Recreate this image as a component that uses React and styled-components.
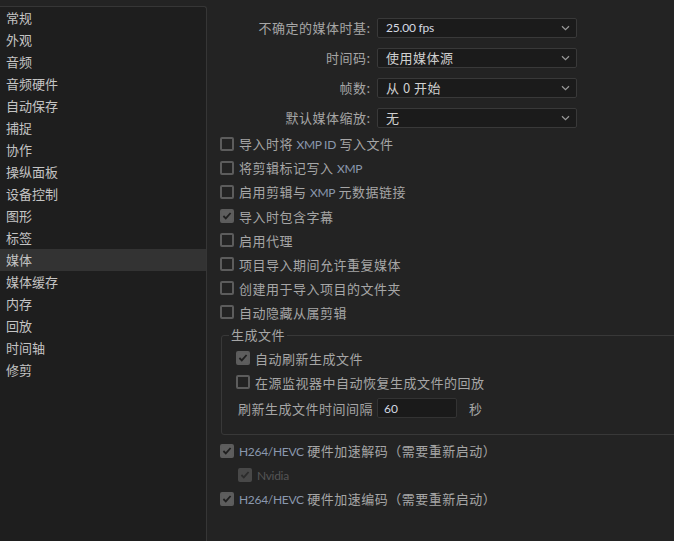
import React from 'react';
import styled, { createGlobalStyle } from 'styled-components';

const Global = createGlobalStyle`
  html, body { margin: 0; padding: 0; background: #232323; overflow: hidden; }
  body { font-family: "Noto Sans CJK SC", "Noto Sans", sans-serif; font-size: 13px; }
  #root { width: 674px; height: 541px; }
`;

const latinStack = '"Lato", "Open Sans", sans-serif';

const Layout = styled.div`
  display: flex;
  width: 674px;
  height: 541px;
  background: #232323;
  overflow: hidden;
`;

const Sidebar = styled.div`
  width: 207px;
  flex: none;
  padding-top: 6px;
  box-sizing: border-box;
`;

const SideList = styled.ul`
  margin: 0;
  padding: 0;
  list-style: none;
  height: 100%;
  background: #1e1e1e;
  border-top: 1px solid #363636;
  border-right: 1px solid #363636;
  border-top-right-radius: 3px;
  box-sizing: border-box;
`;

const SideItem = styled.li`
  height: 22px;
  line-height: 21px;
  padding-left: 6px;
  color: #c4c4c4;
  background: ${p => (p.$active ? '#333333' : 'transparent')};
`;

const Main = styled.div`
  flex: 1;
  min-width: 0;
  padding: 18px 0 0 13px;
  box-sizing: border-box;
  letter-spacing: 0.5px;
`;

const SelectGrid = styled.div`
  display: grid;
  grid-template-columns: 150px 200px;
  grid-auto-rows: 20px;
  column-gap: 7px;
  row-gap: 10px;
  align-items: center;
`;

const FieldLabel = styled.div`
  text-align: right;
  color: #a6a6a6;
  height: 20px;
  line-height: 19px;
  white-space: nowrap;
  margin-right: -0.5px;
`;

const SelectBox = styled.div`
  height: 20px;
  box-sizing: border-box;
  border: 1px solid #393939;
  border-radius: 2px;
  background: #1b1b1b;
  display: flex;
  align-items: center;
  justify-content: space-between;
  padding: 0 6px 0 8px;
  line-height: 18px;
  overflow: hidden;
  color: ${p => (p.$latin ? '#d4d9e2' : '#d0d0d0')};
  font-family: ${p => (p.$latin ? latinStack : 'inherit')};
  font-size: ${p => (p.$latin ? '12px' : '13px')};
  letter-spacing: ${p => (p.$latin ? '-0.2px' : '0.5px')};
`;

const CheckList = styled.div`
  display: flex;
  flex-direction: column;
  margin-top: ${p => p.$top || 0}px;
`;

const CheckRow = styled.label`
  display: flex;
  align-items: center;
  gap: 5px;
  height: 24px;
  line-height: 23px;
  margin-left: ${p => p.$indent || 0}px;
  color: ${p => (p.$disabled ? '#555555' : '#a6a6a6')};
  white-space: nowrap;
`;

const Box = styled.span`
  width: 14px;
  height: 14px;
  box-sizing: border-box;
  flex: none;
  border-radius: 2px;
  border: 2px solid ${p => (p.$disabled ? '#484848' : '#5c5c5c')};
  background: ${p => (p.$checked ? (p.$disabled ? '#484848' : '#5e5e5e') : 'transparent')};
  display: flex;
  align-items: center;
  justify-content: center;
`;

const Latin = styled.span`
  font-family: ${latinStack};
  color: ${p => (p.$muted ? '#555555' : '#8a98ae')};
  font-size: 12px;
  letter-spacing: -0.3px;
`;

const Group = styled.fieldset`
  margin: 3px -30px 0 1px;
  padding: 0;
  border: 1px solid #383838;
  border-radius: 3px;
  min-width: 0;
`;

const Legend = styled.legend`
  margin-left: 7px;
  padding: 0 2px;
  height: 16px;
  line-height: 16px;
  color: #a6a6a6;
`;

const GroupBody = styled.div`
  padding: 3px 0 12px 14px;
`;

const IntervalRow = styled.div`
  display: flex;
  align-items: center;
  height: 28px;
  margin-left: 2px;
  color: #a6a6a6;
  white-space: nowrap;
`;

const NumberInput = styled.div`
  width: 80px;
  height: 20px;
  box-sizing: border-box;
  margin-left: 4px;
  border: 1px solid #333333;
  border-radius: 2px;
  background: #1a1a1a;
  padding-left: 6px;
  display: flex;
  align-items: center;
  color: #d4d9e2;
  font-family: ${latinStack};
  font-size: 12px;
  letter-spacing: 0;
`;

const Unit = styled.span`
  margin-left: 12px;
`;

const Chevron = () => (
  <svg width="9" height="6" viewBox="0 0 9 6">
    <path d="M1 1.2 L4.5 4.6 L8 1.2" fill="none" stroke="#9a9a9a" strokeWidth="1.2" />
  </svg>
);

const Check = ({ checked, disabled, indent, children }) => (
  <CheckRow $indent={indent} $disabled={disabled}>
    <Box $checked={checked} $disabled={disabled}>
      {checked && (
        <svg width="10" height="10" viewBox="0 0 10 10">
          <path d="M1.4 5 L3.8 7.4 L8.6 2" fill="none" stroke={disabled ? '#2c2c2c' : '#1f1f1f'} strokeWidth="1.8" />
        </svg>
      )}
    </Box>
    <span>{children}</span>
  </CheckRow>
);

const sideItems = ['常规', '外观', '音频', '音频硬件', '自动保存', '捕捉', '协作', '操纵面板', '设备控制', '图形', '标签', '媒体', '媒体缓存', '内存', '回放', '时间轴', '修剪'];

export default function App() {
  return (
    <>
      <Global />
      <Layout>
        <Sidebar>
          <SideList>
            {sideItems.map(s => (
              <SideItem key={s} $active={s === '媒体'}>{s}</SideItem>
            ))}
          </SideList>
        </Sidebar>
        <Main>
          <SelectGrid>
            <FieldLabel>不确定的媒体时基:</FieldLabel>
            <SelectBox $latin>25.00 fps<Chevron /></SelectBox>
            <FieldLabel>时间码:</FieldLabel>
            <SelectBox>使用媒体源<Chevron /></SelectBox>
            <FieldLabel>帧数:</FieldLabel>
            <SelectBox>从 0 开始<Chevron /></SelectBox>
            <FieldLabel>默认媒体缩放:</FieldLabel>
            <SelectBox>无<Chevron /></SelectBox>
          </SelectGrid>
          <CheckList $top={4}>
            <Check>导入时将 <Latin>XMP ID</Latin> 写入文件</Check>
            <Check>将剪辑标记写入 <Latin>XMP</Latin></Check>
            <Check>启用剪辑与 <Latin>XMP</Latin> 元数据链接</Check>
            <Check checked>导入时包含字幕</Check>
            <Check>启用代理</Check>
            <Check>项目导入期间允许重复媒体</Check>
            <Check>创建用于导入项目的文件夹</Check>
            <Check>自动隐藏从属剪辑</Check>
          </CheckList>
          <Group>
            <Legend>生成文件</Legend>
            <GroupBody>
              <Check checked>自动刷新生成文件</Check>
              <Check>在源监视器中自动恢复生成文件的回放</Check>
              <IntervalRow>
                刷新生成文件时间间隔
                <NumberInput>60</NumberInput>
                <Unit>秒</Unit>
              </IntervalRow>
            </GroupBody>
          </Group>
          <CheckList $top={4}>
            <Check checked><Latin>H264/HEVC</Latin> 硬件加速解码（需要重新启动）</Check>
            <Check checked disabled indent={18}><Latin $muted>Nvidia</Latin></Check>
            <Check checked><Latin>H264/HEVC</Latin> 硬件加速编码（需要重新启动）</Check>
          </CheckList>
        </Main>
      </Layout>
    </>
  );
}
